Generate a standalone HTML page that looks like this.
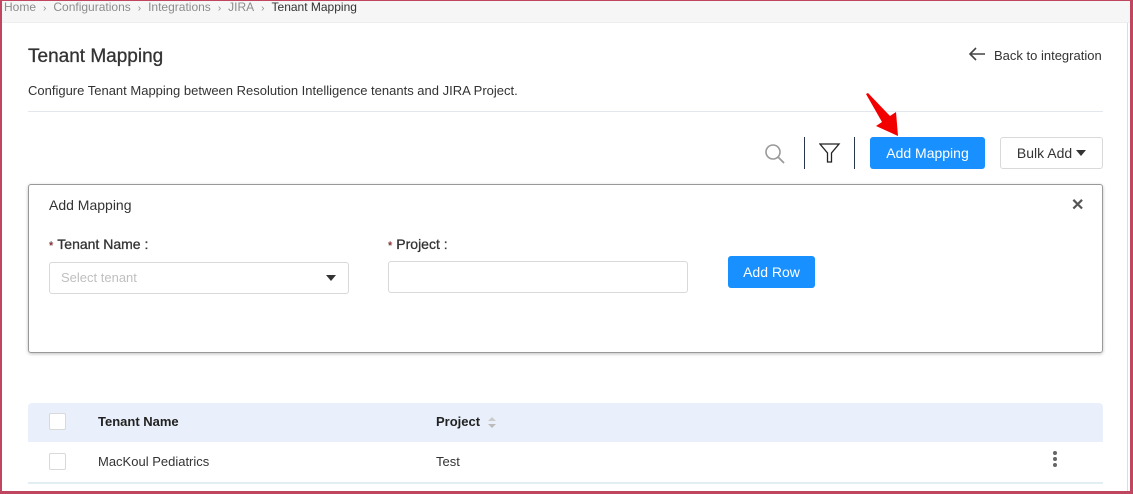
<!DOCTYPE html>
<html><head><style>
*{box-sizing:border-box;margin:0;padding:0}
body{width:1133px;height:494px;overflow:hidden;background:#fff;font-family:"Liberation Sans",sans-serif;position:relative;color:#333}
.frame{position:absolute;left:0;top:0;width:1133px;height:494px;border:2px solid #c0465f;border-top-width:1px;border-bottom-width:3px;border-right-width:3px;pointer-events:none;z-index:10}
.abs{position:absolute}
.bc{left:0;top:0;width:1133px;height:23px;background:#f6f6f6;border-bottom:1px solid #eee;font-size:12px;color:#8c8c8c;padding-left:4px;line-height:14px}
.bc b{font-weight:normal;color:#333}
.bc i{font-style:normal;margin:0 7px;font-size:10px}
</style></head><body>
<div class="abs bc">Home<i>›</i>Configurations<i>›</i>Integrations<i>›</i>JIRA<i>›</i><b>Tenant Mapping</b></div>
<div class="abs" style="left:1127px;top:23px;width:1px;height:470px;background:#ddd"></div>
<div class="abs" style="left:28px;top:46px;font-size:19px;color:#333;-webkit-text-stroke:0.3px #333">Tenant Mapping</div>
<div class="abs" style="left:968px;top:47px;font-size:13px;color:#333"><svg width="18" height="14" style="vertical-align:-1px;margin-right:8px"><path d="M17 7H2M8 1L2 7l6 6" stroke="#444" stroke-width="1.6" fill="none"/></svg>Back to integration</div>
<div class="abs" style="left:28px;top:83px;font-size:13px;color:#333">Configure Tenant Mapping between Resolution Intelligence tenants and JIRA Project.</div>
<div class="abs" style="left:28px;top:111px;width:1075px;height:1px;background:#e4e6ee"></div>
<svg class="abs" style="left:764px;top:143px" width="22" height="22"><circle cx="9" cy="9" r="7" stroke="#999" stroke-width="1.6" fill="none"/><path d="M14 14l6 6" stroke="#999" stroke-width="1.8"/></svg>
<div class="abs" style="left:804px;top:137px;width:1px;height:32px;background:#2a3550"></div>
<svg class="abs" style="left:819px;top:142px" width="22" height="22"><path d="M1 2h19l-7.5 9v9h-4v-9z" stroke="#222" stroke-width="1.3" fill="none"/></svg>
<div class="abs" style="left:854px;top:137px;width:1px;height:32px;background:#2a3550"></div>
<div class="abs" style="left:870px;top:137px;width:115px;height:32px;background:#1890ff;border-radius:3px;color:#fff;font-size:14px;text-align:center;line-height:32px">Add Mapping</div>
<div class="abs" style="left:1000px;top:137px;width:103px;height:32px;border:1px solid #d9d9d9;border-radius:3px;font-size:14px;text-align:center;line-height:30px;color:#333">Bulk Add <span style="display:inline-block;border-left:5px solid transparent;border-right:5px solid transparent;border-top:6px solid #333;vertical-align:2px"></span></div>
<svg class="abs" style="left:862px;top:92px" width="44" height="50"><path d="M4 2L20 30l-6 4 22 10-2-24-6 4L6 1z" fill="#f20000"/></svg>
<div class="abs" style="left:28px;top:184px;width:1075px;height:169px;border:1px solid #999;border-radius:3px;box-shadow:0 1px 3px rgba(0,0,0,.25)"></div>
<div class="abs" style="left:49px;top:197px;font-size:14px;color:#333">Add Mapping</div>
<div class="abs" style="left:1071px;top:195px;font-size:16px;font-weight:bold;color:#555">✕</div>
<div class="abs" style="left:49px;top:236px;font-size:14px;color:#333;-webkit-text-stroke:0.3px #333"><span style="color:#f5222d;font-size:11px;margin-right:4px">*</span>Tenant Name :</div>
<div class="abs" style="left:388px;top:236px;font-size:14px;color:#333;-webkit-text-stroke:0.3px #333"><span style="color:#f5222d;font-size:11px;margin-right:4px">*</span>Project :</div>
<div class="abs" style="left:49px;top:262px;width:300px;height:32px;border:1px solid #d9d9d9;border-radius:3px;font-size:13px;color:#bfbfbf;padding-left:11px;line-height:30px">Select tenant<span style="position:absolute;right:12px;top:12px;border-left:5px solid transparent;border-right:5px solid transparent;border-top:6px solid #333"></span></div>
<div class="abs" style="left:388px;top:261px;width:300px;height:32px;border:1px solid #d9d9d9;border-radius:3px"></div>
<div class="abs" style="left:728px;top:256px;width:87px;height:32px;background:#1890ff;border-radius:3px;color:#fff;font-size:14px;text-align:center;line-height:32px">Add Row</div>
<div class="abs" style="left:28px;top:403px;width:1075px;height:39px;background:#e9f0fb;border-radius:4px 4px 0 0"></div>
<div class="abs" style="left:49px;top:413px;width:17px;height:17px;border:1px solid #d9d9d9;background:#fff;border-radius:2px"></div>
<div class="abs" style="left:98px;top:414px;font-size:13px;font-weight:bold;color:#222">Tenant Name</div>
<div class="abs" style="left:436px;top:414px;font-size:13px;font-weight:bold;color:#222">Project</div>
<div class="abs" style="left:488px;top:417px;border-left:4px solid transparent;border-right:4px solid transparent;border-bottom:4px solid #ccc"></div>
<div class="abs" style="left:488px;top:424px;border-left:4px solid transparent;border-right:4px solid transparent;border-top:4px solid #bbb"></div>
<div class="abs" style="left:49px;top:453px;width:17px;height:17px;border:1px solid #d9d9d9;background:#fff;border-radius:2px"></div>
<div class="abs" style="left:98px;top:454px;font-size:13px;color:#333">MacKoul Pediatrics</div>
<div class="abs" style="left:436px;top:454px;font-size:13px;color:#333">Test</div>
<div class="abs" style="left:1053px;top:451px;width:5px">
<div style="width:4px;height:4px;background:#666;border-radius:50%;margin-bottom:2px"></div><div style="width:4px;height:4px;background:#666;border-radius:50%;margin-bottom:2px"></div><div style="width:4px;height:4px;background:#666;border-radius:50%"></div></div>
<div class="abs" style="left:28px;top:482px;width:1075px;height:2px;background:#e3eef4"></div>
<div class="frame"></div>
</body></html>
